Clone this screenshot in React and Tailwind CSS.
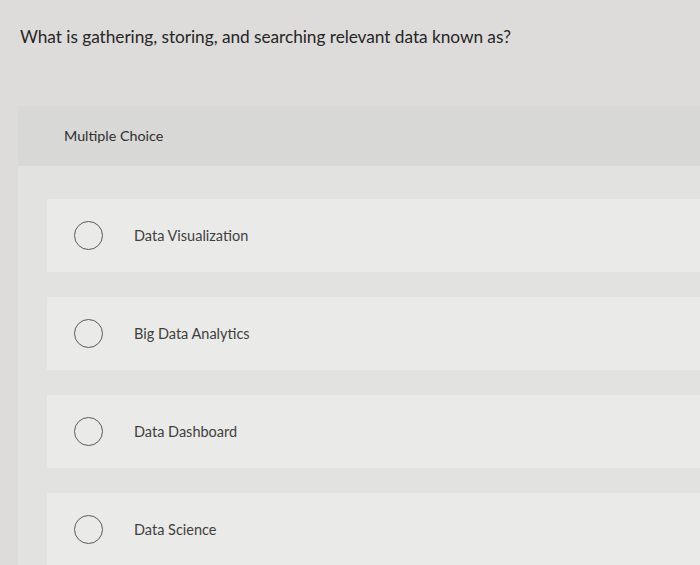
export default function App() {
  const options = ["Data Visualization", "Big Data Analytics", "Data Dashboard", "Data Science"];
  return (
    <div className="w-[700px] h-[565px] overflow-hidden bg-[#dddcda]" style={{ fontFamily: "Lato, 'Open Sans', sans-serif" }}>
      <div className="pt-[25px] pl-[20px] h-[106px] text-[17.3px] leading-[24px] text-[#262626] tracking-[-0.05px]">
        What is gathering, storing, and searching relevant data known as?
      </div>
      <div className="ml-[18px] bg-[#e2e2e0] h-[459px]">
        <div className="h-[60px] bg-[#d8d8d6] pl-[46px] flex items-center text-[14.3px] text-[#2f2f2f]">
          Multiple Choice
        </div>
        <div className="pl-[29px] pt-[33px] flex flex-col gap-[25px]">
          {options.map((o) => (
            <div key={o} className="h-[73px] bg-[#eaeae8] flex items-center">
              <div className="ml-[27px] w-[29px] h-[29px] rounded-full border-[1.5px] border-[#5a5a5a]" />
              <div className="ml-[31px] text-[14.5px] text-[#3f3f3f]">{o}</div>
            </div>
          ))}
        </div>
      </div>
    </div>
  );
}
